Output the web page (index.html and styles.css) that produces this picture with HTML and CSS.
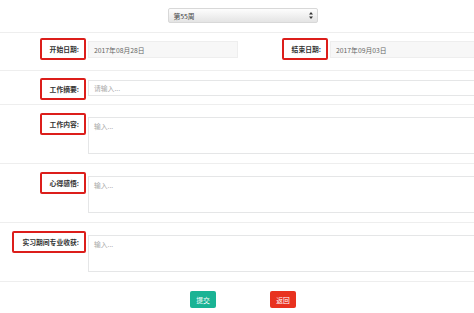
FILE: index.html
```html
<!DOCTYPE html>
<html lang="zh-CN">
  <head>
    <meta charset="UTF-8" />
    <meta name="viewport" content="width=device-width, initial-scale=1.0" />
    <title>周报</title>
    <link rel="stylesheet" href="styles.css">
  </head>
  <body>
    <div class="week-bar">
      <div class="week-select">
        <span>第55周</span>
        <svg class="arrows" width="4" height="7" viewBox="0 0 4 7">
          <path d="M2 0 L4 2.6 L0 2.6 Z M2 7 L4 4.4 L0 4.4 Z" fill="#333"/>
        </svg>
      </div>
    </div>

    <form class="report">
      <div class="row row-dates">
        <div class="label-cell"><span class="label-box">开始日期:</span></div>
        <input class="field field-date" type="text" value="2017年08月28日" readonly>
        <div class="label-cell label-cell-end"><span class="label-box">结束日期:</span></div>
        <input class="field field-date field-grow" type="text" value="2017年09月03日" readonly>
      </div>

      <div class="row row-line">
        <div class="label-cell"><span class="label-box">工作摘要:</span></div>
        <input class="field field-line" type="text" placeholder="请输入...">
      </div>

      <div class="row">
        <div class="label-cell"><span class="label-box">工作内容:</span></div>
        <textarea class="field field-area" placeholder="输入..."></textarea>
      </div>

      <div class="row">
        <div class="label-cell"><span class="label-box">心得感悟:</span></div>
        <textarea class="field field-area" placeholder="输入..."></textarea>
      </div>

      <div class="row">
        <div class="label-cell"><span class="label-box">实习期间专业收获:</span></div>
        <textarea class="field field-area" placeholder="输入..."></textarea>
      </div>

      <div class="actions">
        <button type="submit" class="btn btn-submit">提交</button>
        <button type="button" class="btn btn-back">返回</button>
      </div>
    </form>
  </body>
</html>
```

FILE: styles.css
```css
* {
  margin: 0;
  padding: 0;
  box-sizing: border-box;
}

body {
  font-family: "Noto Sans CJK SC", "Liberation Sans", sans-serif;
  font-size: 6.8px;
  color: #333;
  background: #fff;
  overflow: hidden;
}

.week-bar {
  display: flex;
  justify-content: center;
  padding: 8px 0 9px 11px;
  border-bottom: 1px solid #eee;
}

.week-select {
  width: 150px;
  height: 15px;
  display: flex;
  align-items: center;
  justify-content: space-between;
  padding: 0 4px 0 5px;
  border: 1px solid #d8d8d8;
  border-radius: 2px;
  background: linear-gradient(#fdfdfd, #e4e4e4);
  color: #444;
}

.row {
  display: flex;
  align-items: flex-start;
  padding: 8px 0 9px;
  border-bottom: 1px solid #eee;
}

.row-dates {
  padding: 5px 0 10px;
}

.row-line {
  padding: 7px 0 4px;
}

.label-cell {
  flex: none;
  width: 88px;
  padding-right: 2px;
  text-align: right;
}

.label-cell-end {
  width: 92px;
}

.label-box {
  display: inline-block;
  height: 22px;
  line-height: 18px;
  padding: 0 5px 0 8px;
  border: 2px solid #dc1e1b;
  border-radius: 2px;
  font-weight: bold;
  color: #333;
}

.field {
  flex: 1;
  height: 16px;
  margin-top: 2px;
  margin-right: -2px;
  padding: 0 5px;
  border: 1px solid #e5e6e7;
  background: #fff;
  font: inherit;
  color: #666;
  outline: none;
}

.field::placeholder {
  color: #aaa;
}

.field-date {
  flex: none;
  width: 150px;
  height: 17px;
  margin-top: 3px;
  margin-right: 0;
  background: #f7f7f7;
  border-color: #eee;
}

.field-grow {
  flex: 1;
  margin-right: -2px;
}

.field-area {
  height: 37px;
  margin-top: 4px;
  padding-top: 3px;
  resize: none;
}

.actions {
  display: flex;
  justify-content: center;
  gap: 54px;
  padding: 9px 0 0 12px;
}

.btn {
  width: 26px;
  height: 17px;
  border: none;
  border-radius: 2px;
  color: #fff;
  font: inherit;
  cursor: pointer;
}

.btn-submit {
  background: #1ab394;
}

.btn-back {
  background: #e8321f;
}
```
